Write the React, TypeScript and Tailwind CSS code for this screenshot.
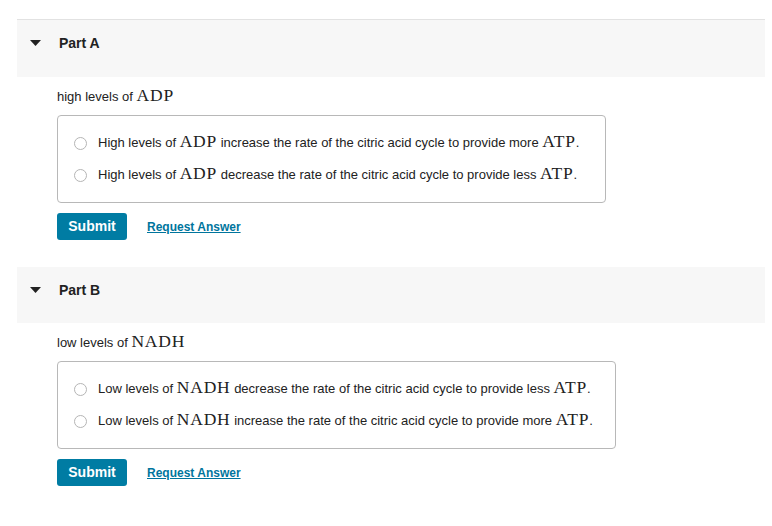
import { ReactNode } from 'react';

const sans = 'font-["Liberation_Sans",Arial,sans-serif]';

function M({ children }: { children: ReactNode }) {
  return (
    <span className='font-["Liberation_Serif",serif] text-[17.5px] tracking-[0.8px] leading-[16px]'>
      {children}
    </span>
  );
}

function Option({ children }: { children: ReactNode }) {
  return (
    <label className="flex items-center h-[32px]">
      <span className="w-[13px] h-[13px] rounded-full border border-[#b5b5b5] bg-white ml-[16px] shrink-0" />
      <span className="ml-[11px] text-[13px] text-[#222]">{children}</span>
    </label>
  );
}

function Part({
  title,
  prompt,
  options,
  boxWidth,
  first,
}: {
  title: string;
  prompt: ReactNode;
  options: ReactNode[];
  boxWidth: string;
  first?: boolean;
}) {
  return (
    <section>
      <div
        className={`bg-[#f7f7f7] pt-[15px] ${first ? 'h-[58px] border-t border-[#e2e2e2]' : 'h-[56px]'}`}
      >
        <div className="flex items-center h-[16px]">
          <svg width="11" height="6" viewBox="0 0 11 6" className="ml-[13px]">
            <path d="M0 0 L11 0 L5.5 6 Z" fill="#222" />
          </svg>
          <span className="ml-[18px] text-[14px] leading-[16px] font-bold text-[#222]">{title}</span>
        </div>
      </div>
      <div className="pl-[40px]">
        <p className="mt-[10px] text-[13px] text-[#222] leading-[20px]">{prompt}</p>
        <div
          className={`mt-[8px] border border-[#b8b8b8] rounded-[4px] py-[11px] ${boxWidth}`}
        >
          {options.map((o, i) => (
            <Option key={i}>{o}</Option>
          ))}
        </div>
        <div className="flex items-center mt-[10px]">
          <button className="w-[70px] h-[27px] rounded-[3px] bg-[#007ca3] text-white text-[14px] font-bold">
            Submit
          </button>
          <a className="ml-[20px] text-[12px] font-bold text-[#00759d] underline">Request Answer</a>
        </div>
      </div>
    </section>
  );
}

export default function App() {
  return (
    <div className={`${sans} bg-white w-[772px] h-[526px] pt-[19px] pl-[17px] pr-[7px]`}>
      <Part
        first
        title="Part A"
        prompt={
          <>
            high levels of <M>ADP</M>
          </>
        }
        boxWidth="w-[549px]"
        options={[
          <>
            High levels of <M>ADP</M> increase the rate of the citric acid cycle to provide more <M>ATP</M>.
          </>,
          <>
            High levels of <M>ADP</M> decrease the rate of the citric acid cycle to provide less <M>ATP</M>.
          </>,
        ]}
      />
      <div className="h-[27px]" />
      <Part
        title="Part B"
        prompt={
          <>
            low levels of <M>NADH</M>
          </>
        }
        boxWidth="w-[559px]"
        options={[
          <>
            Low levels of <M>NADH</M> decrease the rate of the citric acid cycle to provide less <M>ATP</M>.
          </>,
          <>
            Low levels of <M>NADH</M> increase the rate of the citric acid cycle to provide more <M>ATP</M>.
          </>,
        ]}
      />
    </div>
  );
}
